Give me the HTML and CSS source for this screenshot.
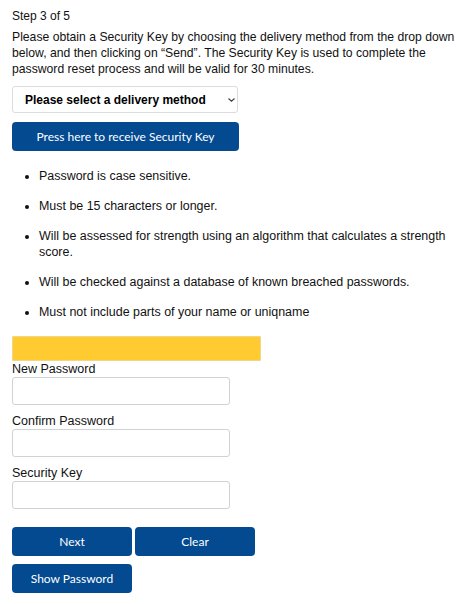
FILE: index.html
```html
<!DOCTYPE html>
<html lang="en">
<head>
<meta charset="utf-8">
<title>Password Reset - Step 3 of 5</title>
<link rel="stylesheet" href="styles.css">
</head>
<body>
<main class="page">
  <div class="step">Step 3 of 5</div>
  <p class="intro">Please obtain a Security Key by choosing the delivery method from the drop down below, and then clicking on “Send”. The Security Key is used to complete the password reset process and will be valid for 30 minutes.</p>
  <div class="select-wrap">
    <select class="method">
      <option>Please select a delivery method</option>
    </select>
    <svg class="chev" width="7" height="4" viewBox="0 0 7 4" aria-hidden="true"><path d="M0.5 0.5 L3.5 3.2 L6.5 0.5" fill="none" stroke="#444" stroke-width="1.2"/></svg>
  </div>
  <button class="btn btn-wide" type="button">Press here to receive Security Key</button>
  <ul class="rules">
    <li>Password is case sensitive.</li>
    <li>Must be 15 characters or longer.</li>
    <li>Will be assessed for strength using an algorithm that calculates a strength score.</li>
    <li>Will be checked against a database of known breached passwords.</li>
    <li>Must not include parts of your name or uniqname</li>
  </ul>
  <div class="strength"></div>
  <label class="lbl" for="np">New Password</label>
  <input class="field" id="np" type="password">
  <label class="lbl" for="cp">Confirm Password</label>
  <input class="field" id="cp" type="password">
  <label class="lbl" for="sk">Security Key</label>
  <input class="field last" id="sk" type="text">
  <div class="actions">
    <button class="btn btn-sm" type="button">Next</button>
    <button class="btn btn-sm" type="button">Clear</button>
  </div>
  <div class="actions second">
    <button class="btn btn-sm" type="button">Show Password</button>
  </div>
</main>
</body>
</html>
```

FILE: styles.css
```css
* { box-sizing: border-box; }
html, body { margin: 0; padding: 0; background: #fff; }
body {
  font-family: "Liberation Sans", Arial, sans-serif;
  font-size: 12px;
  line-height: 16px;
  color: #111;
}
.page {
  padding: 8px 0 10px 12px;
  display: flex;
  flex-direction: column;
  align-items: flex-start;
}
.step { height: 16px; font-size: 12px; }
.intro { margin: 5px 0 0 0; width: 446px; font-size: 12.2px; }
.select-wrap {
  position: relative;
  margin-top: 9px;
  width: 226px;
  height: 27px;
}
.method {
  appearance: none;
  -webkit-appearance: none;
  width: 226px;
  height: 27px;
  border: 1px solid #dcdcdc;
  border-radius: 3px;
  background: #fff;
  font-family: "Liberation Sans", Arial, sans-serif;
  font-size: 12px;
  font-weight: bold;
  color: #000;
  padding: 0 0 0 12px;
}
.chev { position: absolute; left: 216px; top: 12px; }
.btn {
  font-family: Lato, "Open Sans", sans-serif;
  font-size: 12px;
  color: #fff;
  background: #034a91;
  border: none;
  border-radius: 4px;
  height: 29px;
  padding: 0;
  cursor: pointer;
}
.btn-wide { width: 227px; margin-top: 9px; }
.rules {
  margin: 17px 0 0 0;
  padding: 0 0 0 27px;
  width: 440px;
  font-size: 12.45px;
}
.rules li { margin-bottom: 14px; }
.rules li:last-child { margin-bottom: 0; }
.strength {
  margin-top: 16px;
  width: 249px;
  height: 25px;
  background: #ffcb31;
  border: 1px solid #f0d68a;
  border-radius: 1px;
}
.lbl { display: block; height: 16px; color: #111; font-size: 12.5px; }
.field {
  width: 218px;
  height: 28px;
  border: 1px solid #cfd2d6;
  border-radius: 3px;
  background: #fff;
  margin: 0 0 8px 0;
}
.field.last { margin-bottom: 0; }
.actions { display: flex; gap: 3px; margin-top: 18px; }
.actions.second { margin-top: 8px; }
.btn-sm { width: 120px; }
```
